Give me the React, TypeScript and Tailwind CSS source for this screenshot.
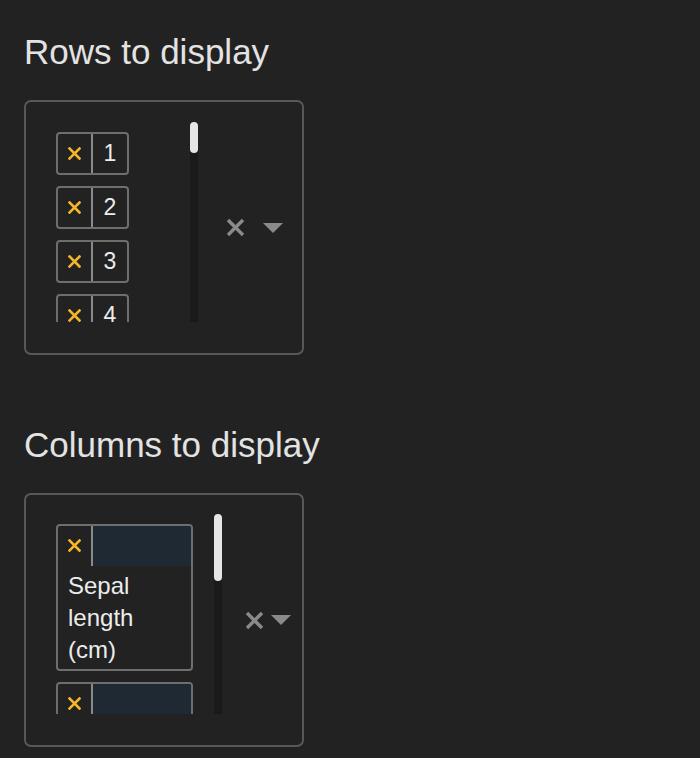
import React from 'react';

function ChipX() {
    return (
        <svg width="13" height="13" viewBox="0 0 13 13" className="block">
            <path d="M1.5 1.5 L11.5 11.5 M11.5 1.5 L1.5 11.5" stroke="#f5b52a" strokeWidth="2.6" strokeLinecap="square" />
        </svg>
    );
}

function Controls({ className }: { className: string }) {
    return (
        <div className={`flex items-center ${className}`}>
            <svg width="19" height="19" viewBox="0 0 19 19" className="block">
                <path d="M2 2 L17 17 M17 2 L2 17" stroke="#8a8a8a" strokeWidth="3.4" />
            </svg>
            <svg width="20" height="10" viewBox="0 0 20 10" className="block ml-[var(--gap)]">
                <path d="M0 0 L20 0 L10 10 Z" fill="#8a8a8a" />
            </svg>
        </div>
    );
}

function Scrollbar({ thumb }: { thumb: string }) {
    return (
        <div className="w-2 h-full bg-[#1a1a1a] flex flex-col shrink-0">
            <div className={`w-2 ${thumb} rounded-full bg-[#e6e6e6]`} />
        </div>
    );
}

function NumberChip({ n }: { n: number }) {
    return (
        <div className="flex w-[73px] h-[43px] shrink-0 border-2 border-[#6e6e6e] rounded-[4px]">
            <div className="w-[35px] flex items-center justify-center border-r-2 border-[#8a8a8a]">
                <ChipX />
            </div>
            <div className="flex-1 flex items-center justify-center text-[23px] text-[#ececec]">{n}</div>
        </div>
    );
}

function ColumnChip({ label }: { label: string }) {
    return (
        <div className="w-[137px] shrink-0 border-2 border-[#6e6e6e] rounded-[4px] overflow-hidden">
            <div className="flex h-[40px]">
                <div className="w-[35px] flex items-center justify-center border-r-2 border-[#8a8a8a]">
                    <ChipX />
                </div>
                <div className="flex-1 bg-[#1f2933]" />
            </div>
            <div className="px-[10px] pt-[4px] pb-[3px] text-[24px] leading-[32px] text-[#ececec]">{label}</div>
        </div>
    );
}

export default function App() {
    return (
        <div
            className="min-h-screen w-full bg-[#222222] px-6 pt-[31px] pb-4 text-[#e3e3e3]"
            style={{ fontFamily: '"Liberation Sans", Arial, sans-serif' }}
        >
            <section>
                <h2 className="text-[35px] leading-[41px] font-normal">Rows to display</h2>
                <div className="mt-[28px] w-[280px] h-[255px] border-2 border-[#585858] rounded-[7px] flex items-center pl-[30px]">
                    <div className="h-[200px] mb-[11px] w-[142px] flex">
                        <div className="flex-1 overflow-hidden flex flex-col gap-[11px] pt-[10px]">
                            {[1, 2, 3, 4, 5].map((n) => (
                                <NumberChip key={n} n={n} />
                            ))}
                        </div>
                        <Scrollbar thumb="h-[31px]" />
                    </div>
                    <Controls className="ml-[28px] [--gap:18px]" />
                </div>
            </section>

            <section className="mt-[69px]">
                <h2 className="text-[35px] leading-[41px] font-normal">Columns to display</h2>
                <div className="mt-[28px] w-[280px] h-[254px] border-2 border-[#585858] rounded-[7px] flex items-center pl-[30px]">
                    <div className="h-[200px] mb-[13px] w-[166px] flex">
                        <div className="flex-1 overflow-hidden flex flex-col gap-[11px] pt-[10px]">
                            <ColumnChip label="Sepal length (cm)" />
                            <ColumnChip label="Sepal width (cm)" />
                        </div>
                        <Scrollbar thumb="h-[67px]" />
                    </div>
                    <Controls className="ml-[23px] [--gap:7px]" />
                </div>
            </section>
        </div>
    );
}
